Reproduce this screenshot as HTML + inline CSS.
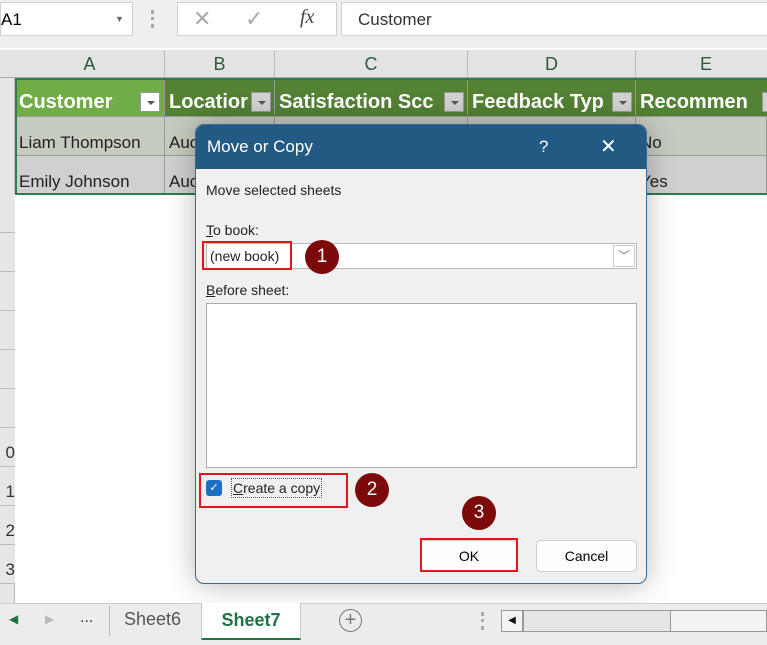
<!DOCTYPE html>
<html><head><style>
*{margin:0;padding:0;box-sizing:border-box}
body{width:767px;height:645px;overflow:hidden;background:#fff;font-family:"Liberation Sans",sans-serif;position:relative}
.a{position:absolute}
.cell{position:absolute;border-right:1px solid #9a9a9a;border-bottom:1px solid #9a9a9a;white-space:nowrap;overflow:hidden}
.hd{color:#fff;font-weight:bold;font-size:20px;line-height:40px;padding-left:4px;padding-top:4px}
.dd{position:absolute;top:14px;width:20px;height:20px;background:#d2d2d2;border:1px solid #999}
.dd:after{content:"";position:absolute;left:6px;top:8px;border-left:4px solid transparent;border-right:4px solid transparent;border-top:4px solid #555}
.data{font-size:17px;line-height:39px;padding-left:4px;padding-top:6px;color:#222;background:#c6cbbf}
.rh{position:absolute;left:0;width:15px;border-bottom:1px solid #bbb;background:#e6e6e6;font-size:17px;text-align:right;color:#333}
.badge{position:absolute;width:34px;height:34px;border-radius:50%;background:#7c0a0a;color:#fff;font-size:19px;text-align:center;line-height:34px}
.red{position:absolute;border:2px solid #e0161b}
</style></head><body>
<div class="a" style="left:0;top:0;width:767px;height:48px;background:#efefef"></div>
<div class="a" style="left:0;top:2px;width:133px;height:34px;background:#fff;border:1px solid #d0d0d0;font-size:17px;line-height:33px">A1<span style="position:absolute;left:114px;top:0;font-size:9px;color:#666">▼</span></div>
<div class="a" style="left:151px;top:10px;width:3px;height:18px;border-left:3px dotted #aaa"></div>
<div class="a" style="left:177px;top:2px;width:160px;height:34px;background:#fff;border:1px solid #d0d0d0"></div>
<div class="a" style="left:193px;top:6px;font-size:22px;color:#aaa">✕</div>
<div class="a" style="left:245px;top:6px;font-size:22px;color:#aaa">✓</div>
<div class="a" style="left:300px;top:6px;font-size:20px;font-style:italic;font-family:'Liberation Serif',serif;color:#444">fx</div>
<div class="a" style="left:341px;top:2px;width:430px;height:34px;background:#fff;border:1px solid #d0d0d0;font-size:17px;line-height:33px;padding-left:16px;color:#333">Customer</div>
<div class="a" style="left:0;top:50px;width:767px;height:28px;background:#e3e3e3;border-bottom:1px solid #aaa"></div>
<div class="a" style="left:15px;top:50px;width:150px;height:28px;border-right:1px solid #bbb;text-align:center;font-size:18px;line-height:28px;color:#2a5a3a">A</div>
<div class="a" style="left:165px;top:50px;width:110px;height:28px;border-right:1px solid #bbb;text-align:center;font-size:18px;line-height:28px;color:#2a5a3a">B</div>
<div class="a" style="left:275px;top:50px;width:193px;height:28px;border-right:1px solid #bbb;text-align:center;font-size:18px;line-height:28px;color:#2a5a3a">C</div>
<div class="a" style="left:468px;top:50px;width:168px;height:28px;border-right:1px solid #bbb;text-align:center;font-size:18px;line-height:28px;color:#2a5a3a">D</div>
<div class="a" style="left:636px;top:50px;width:140px;height:28px;text-align:center;font-size:18px;line-height:28px;color:#2a5a3a">E</div>
<div class="a" style="left:0;top:78px;width:15px;height:530px;background:#e6e6e6;border-right:1px solid #bbb"></div>
<div class="rh" style="top:194px;height:39px"></div><div class="rh" style="top:233px;height:39px"></div><div class="rh" style="top:272px;height:39px"></div><div class="rh" style="top:311px;height:39px"></div><div class="rh" style="top:350px;height:39px"></div><div class="rh" style="top:389px;height:39px"></div>
<div class="rh" style="top:428px;height:39px;line-height:50px">0</div>
<div class="rh" style="top:467px;height:39px;line-height:50px">1</div>
<div class="rh" style="top:506px;height:39px;line-height:50px">2</div>
<div class="rh" style="top:545px;height:39px;line-height:50px">3</div>
<div class="cell hd" style="left:15px;top:78px;width:150px;height:39px;background:#70ad47">Customer<div class="dd" style="left:125px;background:#fff"></div></div>
<div class="cell hd" style="left:165px;top:78px;width:110px;height:39px;background:#548235">Locatior<div class="dd" style="left:86px"></div></div>
<div class="cell hd" style="left:275px;top:78px;width:193px;height:39px;background:#548235">Satisfaction Scc<div class="dd" style="left:169px"></div></div>
<div class="cell hd" style="left:468px;top:78px;width:168px;height:39px;background:#548235">Feedback Typ<div class="dd" style="left:144px"></div></div>
<div class="cell hd" style="left:636px;top:78px;width:131px;height:39px;background:#548235;border-right:none">Recommen<div class="dd" style="left:126px"></div></div>
<div class="cell data" style="left:15px;top:117px;width:150px;height:39px">Liam Thompson</div>
<div class="cell data" style="left:165px;top:117px;width:110px;height:39px">Auc</div>
<div class="cell data" style="left:275px;top:117px;width:193px;height:39px"></div>
<div class="cell data" style="left:468px;top:117px;width:168px;height:39px"></div>
<div class="cell data" style="left:636px;top:117px;width:131px;height:39px">No</div>
<div class="cell data" style="left:15px;top:156px;width:150px;height:38px;background:#d0d0d0">Emily Johnson</div>
<div class="cell data" style="left:165px;top:156px;width:110px;height:38px;background:#d0d0d0">Auc</div>
<div class="cell data" style="left:275px;top:156px;width:193px;height:38px;background:#d0d0d0"></div>
<div class="cell data" style="left:468px;top:156px;width:168px;height:38px;background:#d0d0d0"></div>
<div class="cell data" style="left:636px;top:156px;width:131px;height:38px;background:#d0d0d0">Yes</div>
<div class="a" style="left:15px;top:78px;width:760px;height:117px;border:2px solid #2e7d4f"></div>
<div class="a" style="left:196px;top:124px;width:450px;height:460px;box-shadow:0 0 30px rgba(0,0,0,.3);border-radius:10px"></div>
<div class="a" style="left:195px;top:124px;width:452px;height:460px;background:#f0f0f0;border:1px solid #3a6a92;border-radius:9px;overflow:hidden">
 <div style="height:44px;background:#235a83;color:#fff;font-size:17px;line-height:44px;padding-left:11px;position:relative">Move or Copy<span style="position:absolute;left:343px;font-size:17px">?</span><span style="position:absolute;left:404px;font-size:20px;font-weight:lighter">✕</span></div>
 <div class="a" style="left:10px;top:57px;font-size:14px;color:#222">Move selected sheets</div>
 <div class="a" style="left:10px;top:97px;font-size:14px;color:#222"><u>T</u>o book:</div>
 <div class="a" style="left:10px;top:118px;width:431px;height:26px;background:#fff;border:1px solid #bbb;font-size:14px;line-height:24px;padding-left:3px;color:#222">(new book)<div style="position:absolute;right:1px;top:1px;width:22px;height:22px;border:1px solid #ccc;color:#777;text-align:center;font-size:12px;line-height:20px">﹀</div></div>
 <div class="a" style="left:10px;top:157px;font-size:14px;color:#222"><u>B</u>efore sheet:</div>
 <div class="a" style="left:10px;top:178px;width:431px;height:165px;background:#fff;border:1px solid #aaa"></div>
 <div class="a" style="left:10px;top:355px;width:16px;height:16px;background:#1d6fc4;border-radius:3px;color:#fff;font-size:11px;text-align:center;line-height:16px">✓</div>
 <div class="a" style="left:35px;top:353px;font-size:14px;color:#222;border:1px dotted #555;padding:1px 1px"><u>C</u>reate a copy</div>
 <div class="a" style="left:225px;top:415px;width:96px;height:32px;background:#fdfdfd;border:1px solid #ccc;border-radius:4px;text-align:center;font-size:14px;line-height:30px">OK</div>
 <div class="a" style="left:340px;top:415px;width:101px;height:32px;background:#fdfdfd;border:1px solid #ccc;border-radius:4px;text-align:center;font-size:14px;line-height:30px">Cancel</div>
</div>
<div class="red" style="left:202px;top:241px;width:90px;height:29px"></div>
<div class="badge" style="left:305px;top:240px">1</div>
<div class="red" style="left:199px;top:473px;width:149px;height:35px"></div>
<div class="badge" style="left:355px;top:473px">2</div>
<div class="red" style="left:420px;top:538px;width:98px;height:34px"></div>
<div class="badge" style="left:462px;top:496px">3</div>
<div class="a" style="left:0;top:603px;width:767px;height:42px;background:#ececec;border-top:1px solid #ccc"></div>
<div class="a" style="left:9px;top:612px;font-size:12px;color:#217346">◀</div>
<div class="a" style="left:45px;top:612px;font-size:12px;color:#bbb">▶</div>
<div class="a" style="left:80px;top:609px;font-size:16px;color:#333">...</div>
<div class="a" style="left:109px;top:606px;width:1px;height:30px;background:#bbb"></div>
<div class="a" style="left:124px;top:609px;font-size:18px;color:#555">Sheet6</div>
<div class="a" style="left:201px;top:603px;width:100px;height:37px;background:#fff;border-bottom:2px solid #217346;border-left:1px solid #ccc;border-right:1px solid #ccc;font-size:18px;font-weight:bold;color:#217346;text-align:center;line-height:34px">Sheet7</div>
<div class="a" style="left:339px;top:609px;width:23px;height:23px;border:1.5px solid #777;border-radius:50%;text-align:center;line-height:20px;font-size:20px;color:#777">+</div>
<div class="a" style="left:481px;top:612px;width:3px;height:18px;border-left:3px dotted #aaa"></div>
<div class="a" style="left:501px;top:610px;width:266px;height:22px;background:#f3f3f3;border:1px solid #999"></div>
<div class="a" style="left:501px;top:610px;width:22px;height:22px;border:1px solid #999;font-size:10px;text-align:center;line-height:20px;color:#111">◀</div>
<div class="a" style="left:523px;top:610px;width:148px;height:22px;background:#e6e6e6;border:1px solid #999"></div>
</body></html>
